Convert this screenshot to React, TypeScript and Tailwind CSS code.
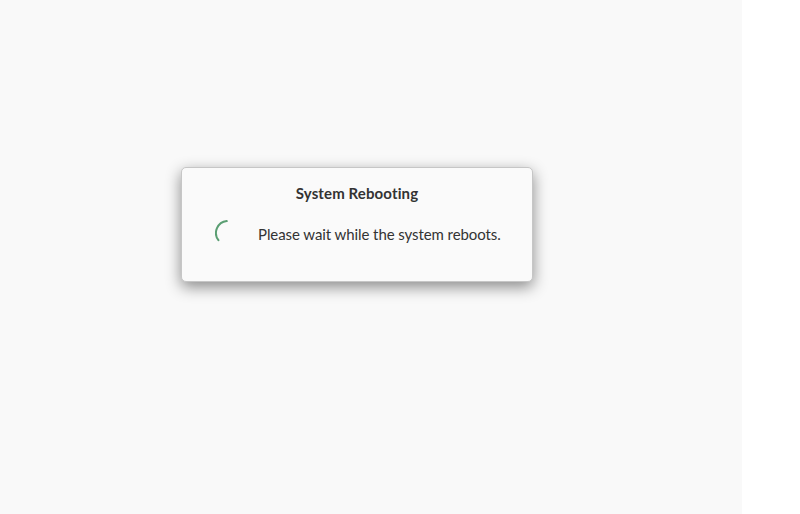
import React from 'react';

function Spinner() {
  // arc of a loading ring, caught mid-turn
  const cx = 13;
  const cy = 13;
  const r = 12;
  const a1 = (143 * Math.PI) / 180;
  const a2 = (264 * Math.PI) / 180;
  const x1 = cx + r * Math.cos(a1);
  const y1 = cy + r * Math.sin(a1);
  const x2 = cx + r * Math.cos(a2);
  const y2 = cy + r * Math.sin(a2);
  return (
    <svg width="26" height="26" viewBox="0 0 26 26" className="shrink-0 -translate-y-[2px]">
      <path
        d={`M ${x1} ${y1} A ${r} ${r} 0 0 1 ${x2} ${y2}`}
        fill="none"
        stroke="#5a9e72"
        strokeWidth="2"
        strokeLinecap="round"
      />
    </svg>
  );
}

export default function App() {
  return (
    <div className="flex h-[514px] w-[800px] bg-white" style={{ fontFamily: 'Lato, "Open Sans", sans-serif' }}>
      <div className="h-full w-[742px] bg-[#f9f9f9] pl-[181px] pt-[167px]">
        <div className="w-[352px] rounded-[5px] border border-[#c6c6c6] bg-[#fafafa] pb-[33px] pt-[14px] shadow-[0_5px_15px_rgba(0,0,0,0.45)]">
          <div className="text-center text-[15px] font-bold tracking-[0.12px] text-[#333]">System Rebooting</div>
          <div className="mt-[17px] flex items-center pl-[33px]">
            <Spinner />
            <span className="ml-[17px] text-[15px] tracking-[-0.08px] text-[#333]">Please wait while the system reboots.</span>
          </div>
        </div>
      </div>
    </div>
  );
}
